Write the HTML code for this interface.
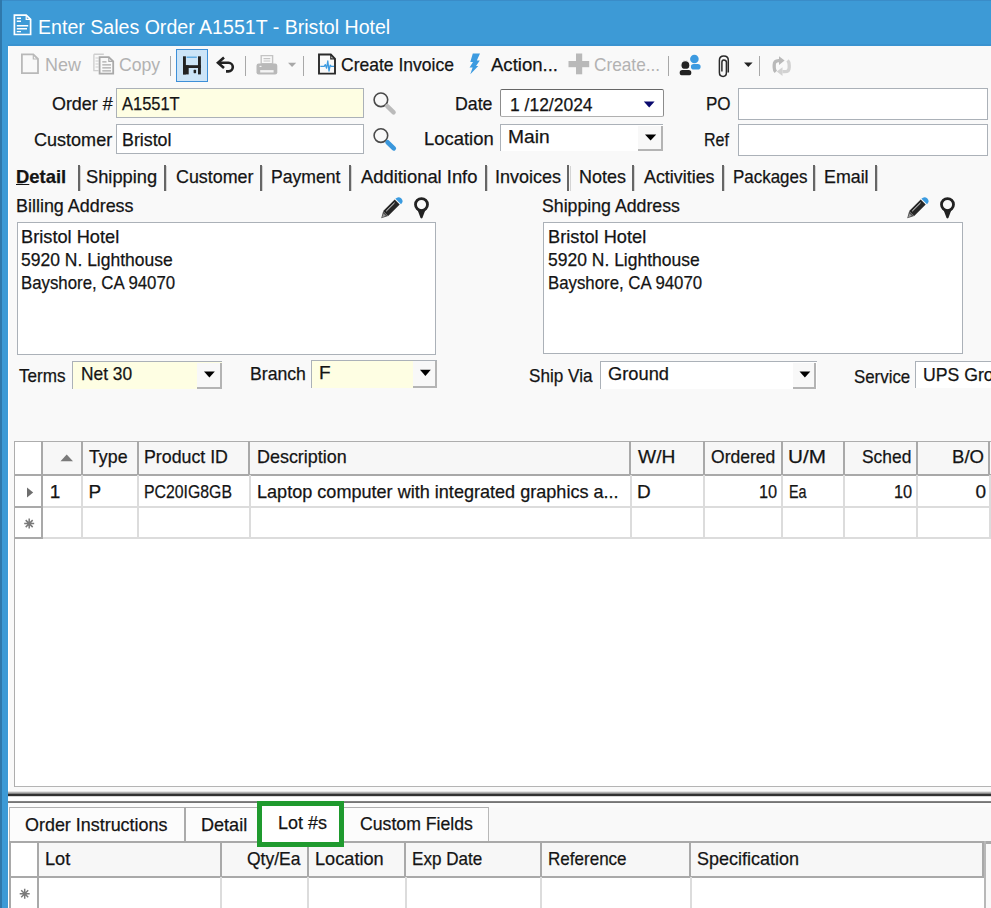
<!DOCTYPE html>
<html><head><meta charset="utf-8"><style>
html,body{margin:0;padding:0}
body{width:991px;height:908px;overflow:hidden;position:relative;background:#f9f9f9;font-family:"Liberation Sans",sans-serif}
.a{position:absolute}
.t{position:absolute;white-space:pre;transform-origin:0 0;-webkit-text-stroke:0.25px currentColor;font-family:"Liberation Sans",sans-serif}
svg{position:absolute;overflow:visible}
</style></head><body>
<div class="a" style="left:0px;top:0px;width:991px;height:45.8px;background:#3d9ad6"></div>
<div class="a" style="left:0px;top:0px;width:991px;height:1px;background:#3a8cc8"></div>
<div class="a" style="left:7.5px;top:43.6px;width:983.5px;height:2.2px;background:#3a93d0"></div>
<div class="a" style="left:0px;top:45.5px;width:7.5px;height:862.5px;background:#3c9ad6"></div>
<div class="a" style="left:0px;top:0px;width:1.5px;height:908px;background:#2f78ab"></div>
<div class="a" style="left:7.5px;top:45.8px;width:1.1px;height:862.2px;background:#ffffff"></div>
<div class="a" style="left:170px;top:55.5px;width:1px;height:20px;background:#a8a8a8"></div>
<div class="a" style="left:244.8px;top:55.5px;width:1px;height:20px;background:#a8a8a8"></div>
<div class="a" style="left:303px;top:55.5px;width:1px;height:20px;background:#a8a8a8"></div>
<div class="a" style="left:667.9px;top:55.5px;width:1px;height:20px;background:#a8a8a8"></div>
<div class="a" style="left:759px;top:55.5px;width:1px;height:20px;background:#a8a8a8"></div>
<div class="a" style="left:176px;top:49px;width:32px;height:33px;background:#cce4f7;border:1px solid #3d8fd8;box-sizing:border-box"></div>
<div class="a" style="left:115.7px;top:88px;width:248.8px;height:30px;background:#fefee3;border:1.5px solid #abb1b8;box-sizing:border-box"></div>
<div class="a" style="left:115.7px;top:124px;width:248.8px;height:30px;background:#fff;border:1.5px solid #abb1b8;box-sizing:border-box"></div>
<div class="a" style="left:500px;top:88.5px;width:164px;height:28.7px;background:#fff;border:1.5px solid #8c8c8c;border-top-color:#666;border-bottom-color:#b0b0b0;border-radius:2px;box-sizing:border-box"></div>
<div class="a" style="left:499.5px;top:124px;width:163.1px;height:26.5px;background:#fff;border-left:1.5px solid #abb1b8;border-top:1.5px solid #abb1b8;box-sizing:border-box"></div>
<div class="a" style="left:738.4px;top:88.3px;width:250.1px;height:32px;background:#fff;border:1.5px solid #abb1b8;box-sizing:border-box"></div>
<div class="a" style="left:738.4px;top:124.3px;width:250.1px;height:32px;background:#fff;border:1.5px solid #abb1b8;box-sizing:border-box"></div>
<div class="a" style="left:78px;top:164.5px;width:2.2px;height:26.7px;background:#666"></div>
<div class="a" style="left:80.2px;top:165.5px;width:1px;height:25.7px;background:#d4d4d4"></div>
<div class="a" style="left:163.7px;top:164.5px;width:2.2px;height:26.7px;background:#666"></div>
<div class="a" style="left:165.9px;top:165.5px;width:1px;height:25.7px;background:#d4d4d4"></div>
<div class="a" style="left:260px;top:164.5px;width:2.2px;height:26.7px;background:#666"></div>
<div class="a" style="left:262.2px;top:165.5px;width:1px;height:25.7px;background:#d4d4d4"></div>
<div class="a" style="left:348.8px;top:164.5px;width:2.2px;height:26.7px;background:#666"></div>
<div class="a" style="left:351px;top:165.5px;width:1px;height:25.7px;background:#d4d4d4"></div>
<div class="a" style="left:485.2px;top:164.5px;width:2.2px;height:26.7px;background:#666"></div>
<div class="a" style="left:487.4px;top:165.5px;width:1px;height:25.7px;background:#d4d4d4"></div>
<div class="a" style="left:567.3px;top:164.5px;width:2.2px;height:26.7px;background:#666"></div>
<div class="a" style="left:569.5px;top:165.5px;width:1px;height:25.7px;background:#d4d4d4"></div>
<div class="a" style="left:631.6px;top:164.5px;width:2.2px;height:26.7px;background:#666"></div>
<div class="a" style="left:633.8px;top:165.5px;width:1px;height:25.7px;background:#d4d4d4"></div>
<div class="a" style="left:722px;top:164.5px;width:2.2px;height:26.7px;background:#666"></div>
<div class="a" style="left:724.2px;top:165.5px;width:1px;height:25.7px;background:#d4d4d4"></div>
<div class="a" style="left:813.2px;top:164.5px;width:2.2px;height:26.7px;background:#666"></div>
<div class="a" style="left:815.4px;top:165.5px;width:1px;height:25.7px;background:#d4d4d4"></div>
<div class="a" style="left:875px;top:164.5px;width:2.2px;height:26.7px;background:#666"></div>
<div class="a" style="left:877.2px;top:165.5px;width:1px;height:25.7px;background:#d4d4d4"></div>
<div class="a" style="left:17.2px;top:222.2px;width:418.8px;height:132.4px;background:#fff;border:1.5px solid #abb1b8;box-sizing:border-box"></div>
<div class="a" style="left:543.4px;top:222.4px;width:419.6px;height:132px;background:#fff;border:1.5px solid #abb1b8;box-sizing:border-box"></div>
<div class="a" style="left:72.2px;top:361.3px;width:149.4px;height:27.5px;background:#fefee3;border-left:1.5px solid #abb1b8;border-top:1.5px solid #abb1b8;box-sizing:border-box"></div><div class="a" style="left:196.8px;top:362.8px;width:24.8px;height:26px;background:#f8f8f8;border-right:2px solid #b4b4b4;border-bottom:2px solid #b4b4b4;box-sizing:border-box"></div>
<div class="a" style="left:310.8px;top:359.5px;width:126.4px;height:28.1px;background:#fefee3;border-left:1.5px solid #abb1b8;border-top:1.5px solid #abb1b8;box-sizing:border-box"></div><div class="a" style="left:412.9px;top:361px;width:24.3px;height:26.6px;background:#f8f8f8;border-right:2px solid #b4b4b4;border-bottom:2px solid #b4b4b4;box-sizing:border-box"></div>
<div class="a" style="left:600px;top:361.3px;width:216.5px;height:27.3px;background:#fff;border-left:1.5px solid #abb1b8;border-top:1.5px solid #abb1b8;box-sizing:border-box"></div><div class="a" style="left:792.7px;top:362.8px;width:23.8px;height:25.8px;background:#f8f8f8;border-right:2px solid #b4b4b4;border-bottom:2px solid #b4b4b4;box-sizing:border-box"></div>
<div class="a" style="left:914.8px;top:361.3px;width:80.2px;height:27.2px;background:#fff;border-left:1.5px solid #abb1b8;border-top:1.5px solid #abb1b8;box-sizing:border-box"></div>
<div class="a" style="left:637.7px;top:125.5px;width:24.9px;height:25px;background:#f8f8f8;border-right:2px solid #b4b4b4;border-bottom:2px solid #b4b4b4;box-sizing:border-box"></div>
<div class="a" style="left:14.6px;top:441px;width:980.4px;height:345.5px;background:#fff"></div>
<div class="a" style="left:42.3px;top:441px;width:952.7px;height:33.5px;background:#f7f7f7"></div>
<div class="a" style="left:13.5px;top:440.5px;width:981.5px;height:1.3px;background:#adadad"></div>
<div class="a" style="left:13.5px;top:440.5px;width:1.4px;height:346px;background:#adadad"></div>
<div class="a" style="left:14.6px;top:785.5px;width:976.4px;height:1.5px;background:#b4b4b4"></div>
<div class="a" style="left:14.6px;top:473.5px;width:980.4px;height:2.1px;background:#a9a9a9"></div>
<div class="a" style="left:41.3px;top:441px;width:2px;height:33.5px;background:#a9a9a9"></div>
<div class="a" style="left:80.5px;top:441px;width:2px;height:33.5px;background:#a9a9a9"></div>
<div class="a" style="left:136.5px;top:441px;width:2px;height:33.5px;background:#a9a9a9"></div>
<div class="a" style="left:248.3px;top:441px;width:2px;height:33.5px;background:#a9a9a9"></div>
<div class="a" style="left:629.3px;top:441px;width:2px;height:33.5px;background:#a9a9a9"></div>
<div class="a" style="left:702.8px;top:441px;width:2px;height:33.5px;background:#a9a9a9"></div>
<div class="a" style="left:780.5px;top:441px;width:2px;height:33.5px;background:#a9a9a9"></div>
<div class="a" style="left:842.5px;top:441px;width:2px;height:33.5px;background:#a9a9a9"></div>
<div class="a" style="left:915.6px;top:441px;width:2px;height:33.5px;background:#a9a9a9"></div>
<div class="a" style="left:988.2px;top:441px;width:2px;height:33.5px;background:#a9a9a9"></div>
<div class="a" style="left:42.3px;top:506px;width:952.7px;height:2px;background:#dcdcdc"></div>
<div class="a" style="left:42.3px;top:537.3px;width:952.7px;height:2px;background:#dcdcdc"></div>
<div class="a" style="left:14.6px;top:506px;width:27.7px;height:2px;background:#a9a9a9"></div>
<div class="a" style="left:14.6px;top:537.3px;width:27.7px;height:2px;background:#a9a9a9"></div>
<div class="a" style="left:41.3px;top:474.5px;width:2px;height:64.8px;background:#a9a9a9"></div>
<div class="a" style="left:81px;top:474.5px;width:2px;height:64.8px;background:#dcdcdc"></div>
<div class="a" style="left:137px;top:474.5px;width:2px;height:64.8px;background:#dcdcdc"></div>
<div class="a" style="left:248.8px;top:474.5px;width:2px;height:64.8px;background:#dcdcdc"></div>
<div class="a" style="left:629.8px;top:474.5px;width:2px;height:64.8px;background:#dcdcdc"></div>
<div class="a" style="left:703.3px;top:474.5px;width:2px;height:64.8px;background:#dcdcdc"></div>
<div class="a" style="left:781px;top:474.5px;width:2px;height:64.8px;background:#dcdcdc"></div>
<div class="a" style="left:843px;top:474.5px;width:2px;height:64.8px;background:#dcdcdc"></div>
<div class="a" style="left:916.1px;top:474.5px;width:2px;height:64.8px;background:#dcdcdc"></div>
<div class="a" style="left:988.7px;top:474.5px;width:2px;height:64.8px;background:#dcdcdc"></div>
<div class="a" style="left:7.5px;top:790.5px;width:983.5px;height:3px;background:linear-gradient(#f9f9f9,#6b6b6b)"></div>
<div class="a" style="left:7.5px;top:793.5px;width:983.5px;height:2.3px;background:#2f2f2f"></div>
<div class="a" style="left:7.5px;top:795.8px;width:983.5px;height:4.9px;background:#fdfdfd"></div>
<div class="a" style="left:7.5px;top:795.8px;width:983.5px;height:1.2px;background:#d6d6d6"></div>
<div class="a" style="left:7.5px;top:800.7px;width:983.5px;height:2.6px;background:linear-gradient(#8a8a8a,#6e6e6e)"></div>
<div class="a" style="left:7.5px;top:803.3px;width:983.5px;height:3.4px;background:#fbfbfb"></div>
<div class="a" style="left:9.6px;top:841.2px;width:981.4px;height:2.7px;background:#a9a9a9"></div>
<div class="a" style="left:9.2px;top:806.7px;width:175.3px;height:34.3px;background:#fcfcfc;border-left:1.5px solid #b8b8b8;border-top:1.6px solid #b0b0b0;box-sizing:border-box"></div>
<div class="a" style="left:183.5px;top:806.7px;width:2px;height:34.3px;background:#ababab"></div>
<div class="a" style="left:185.5px;top:806.7px;width:76.5px;height:34.3px;background:#fcfcfc;border-top:1.6px solid #b0b0b0;box-sizing:border-box"></div>
<div class="a" style="left:339px;top:806.7px;width:149.5px;height:34.3px;background:#fcfcfc;border-top:1.6px solid #b0b0b0;border-right:1.5px solid #b8b8b8;box-sizing:border-box"></div>
<div class="a" style="left:262px;top:805px;width:77px;height:37px;background:#fff"></div>
<div class="a" style="left:9.6px;top:843px;width:974.1px;height:65px;background:#fff"></div>
<div class="a" style="left:38.9px;top:843px;width:943.8px;height:33.2px;background:#f7f7f7"></div>
<div class="a" style="left:8.6px;top:841px;width:2px;height:67px;background:#a9a9a9"></div>
<div class="a" style="left:9.6px;top:876px;width:974.1px;height:2px;background:#a9a9a9"></div>
<div class="a" style="left:36.9px;top:843px;width:2px;height:34px;background:#a9a9a9"></div>
<div class="a" style="left:219.6px;top:843px;width:2px;height:34px;background:#a9a9a9"></div>
<div class="a" style="left:306.7px;top:843px;width:2px;height:34px;background:#a9a9a9"></div>
<div class="a" style="left:404.4px;top:843px;width:2px;height:34px;background:#a9a9a9"></div>
<div class="a" style="left:539.6px;top:843px;width:2px;height:34px;background:#a9a9a9"></div>
<div class="a" style="left:689.4px;top:843px;width:2px;height:34px;background:#a9a9a9"></div>
<div class="a" style="left:981.7px;top:843px;width:2px;height:34px;background:#a9a9a9"></div>
<div class="a" style="left:36.9px;top:877px;width:2px;height:31px;background:#a9a9a9"></div>
<div class="a" style="left:220.1px;top:877px;width:2px;height:31px;background:#dcdcdc"></div>
<div class="a" style="left:307.2px;top:877px;width:2px;height:31px;background:#dcdcdc"></div>
<div class="a" style="left:404.9px;top:877px;width:2px;height:31px;background:#dcdcdc"></div>
<div class="a" style="left:540.1px;top:877px;width:2px;height:31px;background:#dcdcdc"></div>
<div class="a" style="left:689.9px;top:877px;width:2px;height:31px;background:#dcdcdc"></div>
<div class="a" style="left:983.7px;top:841px;width:2px;height:67px;background:#b8b8b8"></div>
<div class="a" style="left:257.2px;top:801px;width:86.8px;height:45.5px;border:5px solid #1f9a2e;box-sizing:border-box"></div>
<svg width="991" height="908" style="left:0;top:0" viewBox="0 0 991 908">
<!-- title doc icon -->
<g fill="none" stroke="#ffffff" stroke-width="1.7">
<path d="M14.4 15.2 H26.2 L30.6 19.4 V34.5 H14.4 Z"/>
<path d="M26.2 15.2 V19.4 H30.6" stroke-width="1.2"/>
</g>
<g stroke="#ffffff" stroke-width="1.4">
<path d="M16.8 18.3 H21 M16.8 21.2 H21 M16.8 25.7 H28.2 M16.8 28.7 H27 M16.8 31.6 H21"/>
</g>
<!-- New doc -->
<g fill="none" stroke="#b9b9b9" stroke-width="1.8">
<path d="M21.9 54.4 H33.3 L38 59 V73.2 H21.9 Z"/>
<path d="M33.3 54.4 V59 H38" stroke-width="1.2"/>
</g>
<!-- Copy icon -->
<g fill="none" stroke="#cfcfcf" stroke-width="1.4">
<path d="M93.9 54.2 H103.8 M93.9 54.2 V70.6 H98.5"/>
<path d="M95.5 58 H98.5 M95.5 61 H98.5 M95.5 64 H98.5 M95.5 67 H98.5" stroke-width="1.1"/>
</g>
<g fill="none" stroke="#a9a9a9" stroke-width="1.8">
<path d="M99.6 57.1 H108.8 L113.2 61.4 V73.6 H99.6 Z"/>
<path d="M108.8 57.1 V61.4 H113.2" stroke-width="1.1"/>
</g>
<path d="M102.3 61.8 H106.5 M102.3 64.8 H111 M102.3 67.8 H111 M102.3 70.8 H111" stroke="#a9a9a9" stroke-width="1.3"/>
<!-- floppy -->
<g fill="#222">
<rect x="183" y="56.3" width="2.9" height="18.1"/>
<rect x="183" y="65.2" width="5.7" height="9.2"/>
<rect x="198" y="56.3" width="2.9" height="18.1"/>
<rect x="183" y="65.2" width="17.9" height="2.8"/>
<rect x="193.6" y="69.8" width="2.5" height="3.4" rx="0.6"/>
</g>
<rect x="186.6" y="56.6" width="10.2" height="1.2" fill="#4a9edc"/>
<!-- undo -->
<g fill="none" stroke="#222" stroke-width="2.6" stroke-linejoin="miter">
<path d="M224 57.6 L218 62.8 L224 68"/>
<path d="M218.5 62.8 H228.5 A4.3 4.3 0 0 1 228.5 71.4 H226"/>
</g>
<!-- printer -->
<g fill="#b9b9b9">
<path d="M261.2 55.6 H272.6 V63.6 H261.2 Z" fill="none" stroke="#c4c4c4" stroke-width="1.4"/>
<path d="M263.5 58.6 H270.3 M263.5 61 H270.3" stroke="#c4c4c4" stroke-width="1.1"/>
<rect x="256.5" y="63.6" width="20.8" height="10.9" rx="2.2"/>
<rect x="260.2" y="70.1" width="13.4" height="2.4" fill="#f4f4f4"/>
<rect x="259.5" y="65.8" width="2" height="1.2" fill="#f4f4f4"/>
</g>
<path d="M288 62.8 H296.2 L292.1 66.9 Z" fill="#a8a8a8"/>
<!-- create invoice doc -->
<g fill="none" stroke="#2a2a2a" stroke-width="1.9">
<path d="M319 54.5 H330.8 L335 58.8 V73.6 H319 Z"/>
<path d="M330.8 54.5 V58.8 H335" stroke-width="1.2"/>
</g>
<path d="M320.3 66.4 H324.2 L325.3 64.6 L326.6 68.2 L327.8 61 L329 71 L330.2 65.2 L331.3 66.4 H334" fill="none" stroke="#3c9ae0" stroke-width="1.3" stroke-linejoin="round"/>
<!-- lightning -->
<path d="M472.8 53.5 H480 L476.8 60.6 H479.8 L476 66 H478.3 L470.3 74.3 L472.6 67.6 H469.6 L473 62 H470.3 Z" fill="#3d9be0"/>
<!-- plus -->
<g fill="#b9b9b9">
<rect x="576" y="53.5" width="6.2" height="20.8"/>
<rect x="568.5" y="61" width="20.7" height="6.2"/>
</g>
<!-- people -->
<g fill="#3c9ae0">
<circle cx="694.4" cy="59" r="4.3"/>
<rect x="690.9" y="64" width="9.7" height="5.6" rx="2.8"/>
</g>
<g fill="#222" stroke="#f9f9f9" stroke-width="1.3">
<circle cx="685.4" cy="65.2" r="4.6"/>
<rect x="679" y="69.4" width="13" height="6.6" rx="3.3"/>
</g>
<!-- paperclip -->
<path d="M728.3 72.6 V60.2 Q728.3 55.9 723.8 55.9 Q719.4 55.9 719.4 60.2 V72.6 Q719.4 76.5 723.1 76.5 Q726.4 76.5 726.4 72.6 V62.2 Q726.4 59.9 723.8 59.9 Q721.9 59.9 721.9 62.2 V71.5" fill="none" stroke="#2a2a2a" stroke-width="1.5"/>
<path d="M744 62.6 H752.6 L748.3 67 Z" fill="#222"/>
<!-- refresh -->
<path d="M775.8 71.8 Q774.2 70.2 774.2 67.2 V65 Q774.2 60.6 778.6 60.6 H780" stroke="#b9b9b9" stroke-width="3.3" fill="none"/>
<path d="M779 56.3 L784.6 60.6 L779 64.9 Z" fill="#b9b9b9"/>
<path d="M787.6 60.4 Q789.2 62 789.2 65 V67.4 Q789.2 71.6 784.8 71.6 H782.5" stroke="#d2d2d2" stroke-width="3.3" fill="none"/>
<path d="M782.5 67.3 L776.8 71.6 L782.5 75.9 Z" fill="#d2d2d2"/>
<!-- magnifiers -->
<g fill="none" stroke="#4a4a4a" stroke-width="1.6">
<circle cx="380.9" cy="99.8" r="6.8"/>
<circle cx="380.9" cy="135.6" r="6.8"/>
</g>
<path d="M386.3 105.2 L388 106.9" stroke="#4a4a4a" stroke-width="2.2"/>
<path d="M387.2 106.1 L393.6 112.4" stroke="#bbbbbb" stroke-width="4.4" stroke-linecap="round"/>
<path d="M386.3 141 L388 142.7" stroke="#4a4a4a" stroke-width="2.2"/>
<path d="M387.6 142.3 L393.8 148.3" stroke="#3a97dc" stroke-width="4.6" stroke-linecap="round"/>
<!-- date dropdown arrow -->
<path d="M643.8 101.4 H654.6 L649.2 107.4 Z" fill="#0a0a6e"/>
<!-- combo arrows -->
<path d="M645 134.6 H656.2 L650.6 140.6 Z" fill="#000"/>
<path d="M204 371.4 H214.8 L209.4 377.5 Z" fill="#000"/>
<path d="M420 369.8 H430.8 L425.4 375.9 Z" fill="#000"/>
<path d="M799.5 371.4 H810.3 L804.9 377.5 Z" fill="#000"/>
<!-- pencils & pins -->
<g id="pp">
<path d="M383.2 211 L394.7 199.5 L399.7 204.5 L388.2 216 Z" fill="#262626"/>
<path d="M383.2 211 L388.2 216 L381.2 218.2 Z" fill="#4a4a4a"/>
<path d="M383.6 213.6 L385.8 215.8 L382 217.4 Z" fill="#9a9a9a"/>
<path d="M386.2 211.2 L394.6 202.8" stroke="#e6e6e6" stroke-width="1"/>
<path d="M395.4 198.8 Q398.4 195.8 401.4 198.6 Q404 201.6 401 204.2 Z" fill="#3a9be0"/>
<circle cx="421.5" cy="204.6" r="6" fill="none" stroke="#222" stroke-width="2.8"/>
<path d="M417.4 209.6 L420.6 218 Q421.5 218.8 422.4 218 L425.6 209.6 Z" fill="#222"/>
</g>
<use href="#pp" x="526" y="0"/>
<!-- grid glyphs -->
<path d="M60.5 461.2 L66.7 454.6 L73 461.2 Z" fill="#7a7a7a"/>
<path d="M27 487.4 L33.2 492.5 L27 497.6 Z" fill="#6e6e6e"/>
<g stroke="#7a7a7a" stroke-width="1.5">
<path d="M29.2 518.6 V528.6 M24.2 523.6 H34.2 M25.7 520.1 L32.7 527.1 M32.7 520.1 L25.7 527.1"/>
<path d="M24.7 888.8 V898.8 M19.7 893.8 H29.7 M21.2 890.3 L28.2 897.3 M28.2 890.3 L21.2 897.3"/>
</g>
</svg>

<span class="t" style="left:38.29px;top:17.89px;font-size:19.5px;line-height:19.5px;color:#ffffff;-webkit-text-stroke:0;transform:scaleX(1.0040)">Enter Sales Order A1551T - Bristol Hotel</span>
<span class="t" style="left:44.96px;top:55.32px;font-size:19px;line-height:19px;color:#b2b2b2;-webkit-text-stroke:0;transform:scaleX(0.9432)">New</span>
<span class="t" style="left:118.57px;top:55.32px;font-size:19px;line-height:19px;color:#b2b2b2;-webkit-text-stroke:0;transform:scaleX(0.9279)">Copy</span>
<span class="t" style="left:340.58px;top:55.42px;font-size:19px;line-height:19px;color:#141414;transform:scaleX(0.9215)">Create Invoice</span>
<span class="t" style="left:490.7px;top:55.42px;font-size:19px;line-height:19px;color:#141414;transform:scaleX(0.9761)">Action...</span>
<span class="t" style="left:593.79px;top:55.42px;font-size:19px;line-height:19px;color:#b2b2b2;-webkit-text-stroke:0;transform:scaleX(0.9071)">Create...</span>
<span class="t" style="left:52.36px;top:94.12px;font-size:19px;line-height:19px;color:#141414;transform:scaleX(0.9413)">Order #</span>
<span class="t" style="left:34.15px;top:129.82px;font-size:19px;line-height:19px;color:#141414;transform:scaleX(0.9494)">Customer</span>
<span class="t" style="left:122px;top:94.42px;font-size:19px;line-height:19px;color:#141414;transform:scaleX(0.8667)">A1551T</span>
<span class="t" style="left:121.76px;top:129.92px;font-size:19px;line-height:19px;color:#141414;transform:scaleX(0.9373)">Bristol</span>
<span class="t" style="left:454.57px;top:94.12px;font-size:19px;line-height:19px;color:#141414;transform:scaleX(0.9342)">Date</span>
<span class="t" style="left:423.83px;top:128.92px;font-size:19px;line-height:19px;color:#141414;transform:scaleX(0.9700)">Location</span>
<span class="t" style="left:510.48px;top:95.42px;font-size:19px;line-height:19px;color:#141414;transform:scaleX(0.9193)">1 /12/2024</span>
<span class="t" style="left:508.19px;top:127.12px;font-size:19px;line-height:19px;color:#141414;transform:scaleX(1.0103)">Main</span>
<span class="t" style="left:705.7px;top:94.22px;font-size:19px;line-height:19px;color:#141414;transform:scaleX(0.8962)">PO</span>
<span class="t" style="left:703.66px;top:129.92px;font-size:19px;line-height:19px;color:#141414;transform:scaleX(0.8448)">Ref</span>
<span class="t" style="left:16.13px;top:167.42px;font-size:19px;line-height:19px;color:#141414;font-weight:700;transform:scaleX(0.9680)"><u>D</u>etail</span>
<span class="t" style="left:86.04px;top:167.42px;font-size:19px;line-height:19px;color:#141414;transform:scaleX(0.9625)">Shipping</span>
<span class="t" style="left:175.56px;top:167.42px;font-size:19px;line-height:19px;color:#141414;transform:scaleX(0.9407)">Customer</span>
<span class="t" style="left:271.27px;top:167.42px;font-size:19px;line-height:19px;color:#141414;transform:scaleX(0.9270)">Payment</span>
<span class="t" style="left:361px;top:167.42px;font-size:19px;line-height:19px;color:#141414;transform:scaleX(0.9667)">Additional Info</span>
<span class="t" style="left:495.2px;top:167.42px;font-size:19px;line-height:19px;color:#141414;transform:scaleX(0.9478)">Invoices</span>
<span class="t" style="left:578.65px;top:167.42px;font-size:19px;line-height:19px;color:#141414;transform:scaleX(0.9458)">Notes</span>
<span class="t" style="left:643.9px;top:167.42px;font-size:19px;line-height:19px;color:#141414;transform:scaleX(0.9413)">Activities</span>
<span class="t" style="left:733.01px;top:167.42px;font-size:19px;line-height:19px;color:#141414;transform:scaleX(0.8915)">Packages</span>
<span class="t" style="left:824.46px;top:167.42px;font-size:19px;line-height:19px;color:#141414;transform:scaleX(0.9378)">Email</span>
<span class="t" style="left:16.26px;top:196.12px;font-size:19px;line-height:19px;color:#141414;transform:scaleX(0.9431)">Billing Address</span>
<span class="t" style="left:542.47px;top:195.92px;font-size:19px;line-height:19px;color:#141414;transform:scaleX(0.9327)">Shipping Address</span>
<span class="t" style="left:20.84px;top:227.42px;font-size:19px;line-height:19px;color:#141414;transform:scaleX(0.9590)">Bristol Hotel</span>
<span class="t" style="left:20.88px;top:250.22px;font-size:19px;line-height:19px;color:#141414;transform:scaleX(0.9209)">5920 N. Lighthouse</span>
<span class="t" style="left:20.92px;top:272.52px;font-size:19px;line-height:19px;color:#141414;transform:scaleX(0.8844)">Bayshore, CA 94070</span>
<span class="t" style="left:547.64px;top:227.42px;font-size:19px;line-height:19px;color:#141414;transform:scaleX(0.9590)">Bristol Hotel</span>
<span class="t" style="left:547.68px;top:250.22px;font-size:19px;line-height:19px;color:#141414;transform:scaleX(0.9209)">5920 N. Lighthouse</span>
<span class="t" style="left:547.72px;top:272.52px;font-size:19px;line-height:19px;color:#141414;transform:scaleX(0.8844)">Bayshore, CA 94070</span>
<span class="t" style="left:19.3px;top:365.92px;font-size:19px;line-height:19px;color:#141414;transform:scaleX(0.9000)">Terms</span>
<span class="t" style="left:80.59px;top:364.32px;font-size:19px;line-height:19px;color:#141414;transform:scaleX(0.9145)">Net 30</span>
<span class="t" style="left:250.17px;top:364.32px;font-size:19px;line-height:19px;color:#141414;transform:scaleX(0.9293)">Branch</span>
<span class="t" style="left:319px;top:363.12px;font-size:19px;line-height:19px;color:#141414">F</span>
<span class="t" style="left:528.8px;top:365.92px;font-size:19px;line-height:19px;color:#141414;transform:scaleX(0.9014)">Ship Via</span>
<span class="t" style="left:608.34px;top:364.32px;font-size:19px;line-height:19px;color:#141414;transform:scaleX(0.9623)">Ground</span>
<span class="t" style="left:854.31px;top:366.52px;font-size:19px;line-height:19px;color:#141414;transform:scaleX(0.8871)">Service</span>
<span class="t" style="left:923.47px;top:365.22px;font-size:19px;line-height:19px;color:#141414;transform:scaleX(0.9300)">UPS Ground</span>
<span class="t" style="left:88.7px;top:447.12px;font-size:19px;line-height:19px;color:#141414;transform:scaleX(0.9350)">Type</span>
<span class="t" style="left:144.06px;top:447.12px;font-size:19px;line-height:19px;color:#141414;transform:scaleX(0.9352)">Product ID</span>
<span class="t" style="left:256.56px;top:447.12px;font-size:19px;line-height:19px;color:#141414;transform:scaleX(0.9441)">Description</span>
<span class="t" style="left:638.1px;top:447.12px;font-size:19px;line-height:19px;color:#141414;transform:scaleX(1.0111)">W/H</span>
<span class="t" style="left:710.68px;top:447.12px;font-size:19px;line-height:19px;color:#141414;transform:scaleX(0.9221)">Ordered</span>
<span class="t" style="left:788.31px;top:447.12px;font-size:19px;line-height:19px;color:#141414;transform:scaleX(1.0875)">U/M</span>
<span class="t" style="left:861.58px;top:447.12px;font-size:19px;line-height:19px;color:#141414;transform:scaleX(0.9154)">Sched</span>
<span class="t" style="left:952.22px;top:447.12px;font-size:19px;line-height:19px;color:#141414;transform:scaleX(0.9774)">B/O</span>
<span class="t" style="left:49.7px;top:481.92px;font-size:19px;line-height:19px;color:#141414">1</span>
<span class="t" style="left:88.4px;top:481.92px;font-size:19px;line-height:19px;color:#141414">P</span>
<span class="t" style="left:144.17px;top:481.92px;font-size:19px;line-height:19px;color:#141414;transform:scaleX(0.8327)">PC20IG8GB</span>
<span class="t" style="left:256.55px;top:481.92px;font-size:19px;line-height:19px;color:#141414;transform:scaleX(0.9511)">Laptop computer with integrated graphics a...</span>
<span class="t" style="left:637.1px;top:481.92px;font-size:19px;line-height:19px;color:#141414">D</span>
<span class="t" style="left:758.54px;top:481.92px;font-size:19px;line-height:19px;color:#141414;transform:scaleX(0.8600)">10</span>
<span class="t" style="left:788.65px;top:481.92px;font-size:19px;line-height:19px;color:#141414;transform:scaleX(0.7545)">Ea</span>
<span class="t" style="left:893.64px;top:481.92px;font-size:19px;line-height:19px;color:#141414;transform:scaleX(0.8600)">10</span>
<span class="t" style="left:975.6px;top:481.92px;font-size:19px;line-height:19px;color:#141414">0</span>
<span class="t" style="left:25.16px;top:814.72px;font-size:19px;line-height:19px;color:#141414;transform:scaleX(0.9433)">Order Instructions</span>
<span class="t" style="left:200.95px;top:814.72px;font-size:19px;line-height:19px;color:#141414;transform:scaleX(0.9500)">Detail</span>
<span class="t" style="left:278.46px;top:812.52px;font-size:19px;line-height:19px;color:#141414;transform:scaleX(0.9440)">Lot #s</span>
<span class="t" style="left:359.77px;top:813.52px;font-size:19px;line-height:19px;color:#141414;transform:scaleX(0.9300)">Custom Fields</span>
<span class="t" style="left:44.74px;top:848.92px;font-size:19px;line-height:19px;color:#141414;transform:scaleX(0.9577)">Lot</span>
<span class="t" style="left:247.48px;top:848.92px;font-size:19px;line-height:19px;color:#141414;transform:scaleX(0.9211)">Qty/Ea</span>
<span class="t" style="left:315.14px;top:848.92px;font-size:19px;line-height:19px;color:#141414;transform:scaleX(0.9557)">Location</span>
<span class="t" style="left:412.3px;top:848.92px;font-size:19px;line-height:19px;color:#141414;transform:scaleX(0.8987)">Exp Date</span>
<span class="t" style="left:547.5px;top:848.92px;font-size:19px;line-height:19px;color:#141414;transform:scaleX(0.8965)">Reference</span>
<span class="t" style="left:697.05px;top:848.92px;font-size:19px;line-height:19px;color:#141414;transform:scaleX(0.9472)">Specification</span>
</body></html>
